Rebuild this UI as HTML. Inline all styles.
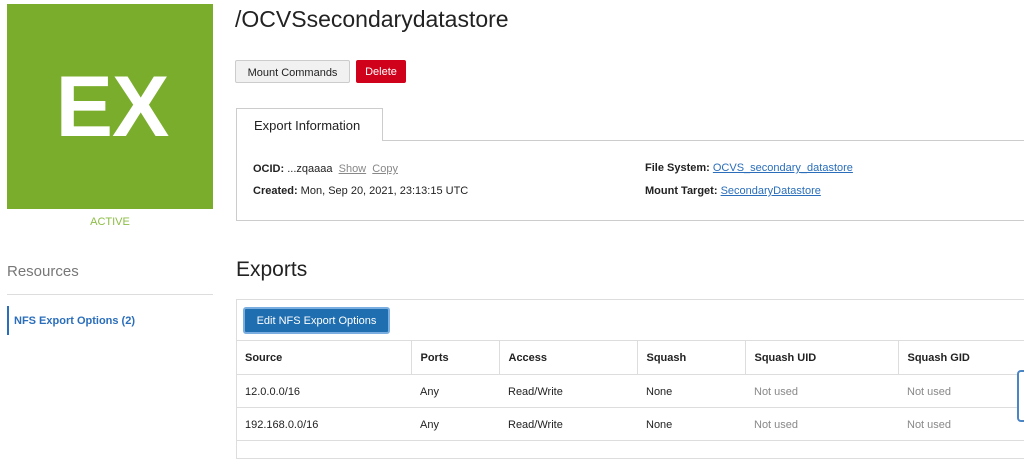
<!DOCTYPE html>
<html><head><style>
*{margin:0;padding:0;box-sizing:border-box}
body{width:1024px;height:454px;overflow:hidden;background:#fff;font-family:"Liberation Sans",sans-serif;color:#222;position:relative}
.a{position:absolute;white-space:nowrap}
a{color:#2a6ebb;text-decoration:underline}
table{border-collapse:collapse;position:absolute;left:236px;top:341px;font-size:11px;table-layout:fixed;width:792px}
td,th{height:33px;border-bottom:1px solid #ddd;text-align:left;padding-left:9px;vertical-align:middle;padding-top:2px}
th{font-weight:bold;border-left:1px solid #ddd}
th:first-child{border-left:none}
td.g{color:#888}
</style></head><body>
<div class="a" style="left:7px;top:4px;width:206px;height:205px;background:#7aad2b"></div>
<div class="a" style="left:9px;top:62px;width:206px;text-align:center;color:#fff;font-weight:bold;font-size:86px;line-height:90px;letter-spacing:-1px">EX</div>
<div class="a" style="left:7px;top:216px;width:206px;text-align:center;color:#8cbd45;font-size:11px">ACTIVE</div>
<div class="a" style="left:235px;top:6px;font-size:23px;color:#222">/OCVSsecondarydatastore</div>
<div class="a" style="left:235px;top:60px;width:115px;height:23px;background:#f1f1f1;border:1px solid #ccc;border-radius:2px;font-size:11px;line-height:22px;padding-top:1px;text-align:center">Mount Commands</div>
<div class="a" style="left:356px;top:60px;width:50px;height:23px;background:#d0021b;border-radius:2px;font-size:11px;line-height:25px;text-align:center;color:#fff">Delete</div>
<div class="a" style="left:236px;top:140px;width:800px;height:81px;border:1px solid #ccc"></div>
<div class="a" style="left:236px;top:108px;width:147px;height:33px;border:1px solid #ccc;border-bottom:none;background:#fff;font-size:13px;line-height:34px;padding-left:17px">Export Information</div>
<div class="a" style="left:253px;top:163px;font-size:11px"><b>OCID:</b> ...zqaaaa &nbsp;<span style="color:#888;text-decoration:underline">Show</span> &nbsp;<span style="color:#888;text-decoration:underline">Copy</span></div>
<div class="a" style="left:253px;top:185px;font-size:11px"><b>Created:</b> Mon, Sep 20, 2021, 23:13:15 UTC</div>
<div class="a" style="left:645px;top:162px;font-size:11px"><b>File System:</b> <a>OCVS_secondary_datastore</a></div>
<div class="a" style="left:645px;top:185px;font-size:11px"><b>Mount Target:</b> <a>SecondaryDatastore</a></div>
<div class="a" style="left:7px;top:263px;font-size:15px;color:#777">Resources</div>
<div class="a" style="left:7px;top:294px;width:206px;height:1px;background:#ddd"></div>
<div class="a" style="left:7px;top:306px;width:2px;height:29px;background:#2a6ebb"></div>
<div class="a" style="left:14px;top:315px;font-size:11px;font-weight:bold;color:#2a6ebb">NFS Export Options (2)</div>
<div class="a" style="left:236px;top:258px;font-size:21px;color:#222">Exports</div>
<div class="a" style="left:236px;top:299px;width:800px;height:160px;border:1px solid #ddd"></div>
<div class="a" style="left:243px;top:307px;width:147px;height:27px;background:#1f6eb0;border:2px solid #7aaee0;border-radius:3px;color:#fff;font-size:11px;line-height:25px;text-align:center">Edit NFS Export Options</div>
<div class="a" style="left:236px;top:340px;width:800px;height:1px;background:#ddd"></div>
<table>
<colgroup><col style="width:175px"><col style="width:88px"><col style="width:138px"><col style="width:108px"><col style="width:153px"><col style="width:130px"></colgroup>
<tr><th>Source</th><th>Ports</th><th>Access</th><th>Squash</th><th>Squash UID</th><th>Squash GID</th></tr>
<tr><td>12.0.0.0/16</td><td>Any</td><td>Read/Write</td><td>None</td><td class="g">Not used</td><td class="g">Not used</td></tr>
<tr><td>192.168.0.0/16</td><td>Any</td><td>Read/Write</td><td>None</td><td class="g">Not used</td><td class="g">Not used</td></tr>
</table>
<div class="a" style="left:1017px;top:370px;width:12px;height:52px;border:2px solid #4a86c5;border-radius:4px;background:#fff"></div>
</body></html>
